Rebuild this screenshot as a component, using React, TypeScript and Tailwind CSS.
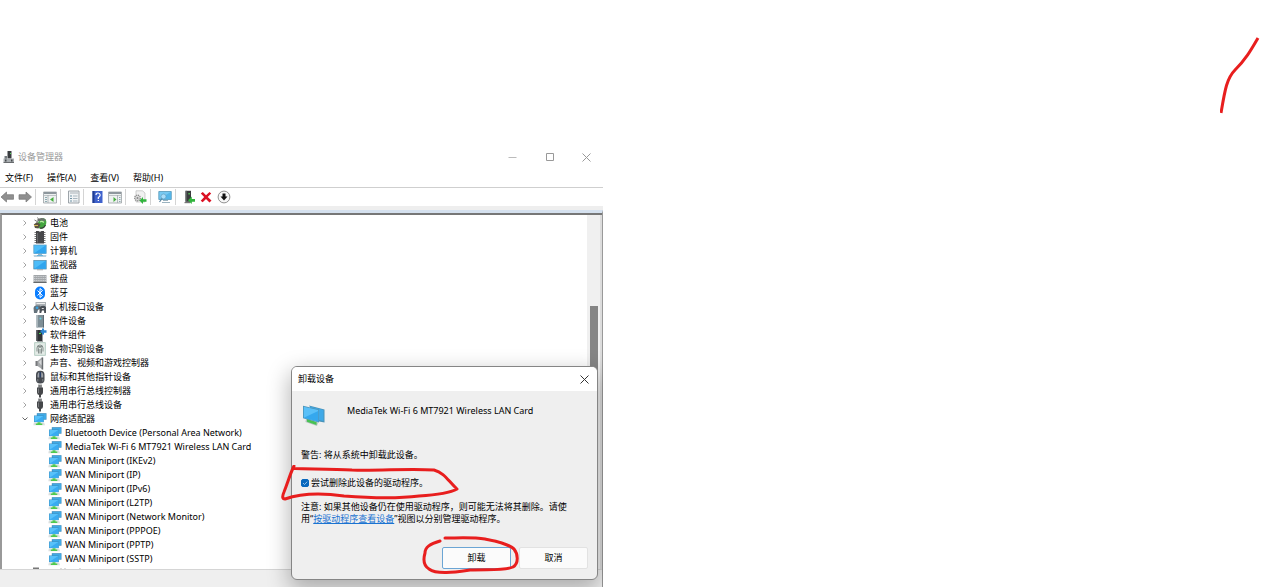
import React, { useState } from "react";

type IconName =
  | "battery"
  | "firmware"
  | "computer"
  | "monitor"
  | "keyboard"
  | "bluetooth"
  | "hid"
  | "software"
  | "component"
  | "biometric"
  | "sound"
  | "mouse"
  | "usb"
  | "network";

const drawings: Record<IconName, React.ReactNode> = {
  battery: (
    <>
      <ellipse cx="9" cy="7.5" rx="4" ry="5.6" fill="#43a540" transform="rotate(25 9 7.5)" />
      <path d="M4 3.800Q8 .5 12.800 3.500L11.500 5.500Q8 3.500 5 5.500z" fill="#6b746d" />
      <path d="M7 6Q9 4.500 10.800 6.500" stroke="#b9eda2" strokeWidth="1.400" fill="none" />
      <path d="M4.500 1.500l2 3M1.500 4l3.500 2" stroke="#666" strokeWidth=".9" />
      <path d="M.8 8.500L4 6l3.500 2.500-2 4-3.500-.5z" fill="#5a5340" />
      <path d="M1 9.500h4" stroke="#d1b759" />
      <path d="M7 12Q10.500 13 12.500 9" stroke="#373f38" strokeWidth="1.200" fill="none" />
    </>
  ),
  firmware: (
    <>
      <path d="M1.500 2.500h2M1.500 4.500h2M1.500 6.500h2M1.500 8.500h2M1.500 10.500h2M1.500 12.500h2M10.500 2.500h2M10.500 4.500h2M10.500 6.500h2M10.500 8.500h2M10.500 10.500h2M10.500 12.500h2" stroke="#777" />
      <path d="M3 1h2.500q1.500 1.500 3 0H11v12.500H3z" fill="#47474a" />
      <path d="M4.500 3v9.500" stroke="#66686a" />
    </>
  ),
  computer: (
    <>
      <rect x=".8" y="1" width="12.400" height="8.500" fill="#4dbcf8" stroke="#5a9dc2" strokeWidth=".7" />
      <path d="M1.200 9.200L12.800 1.300v7.900z" fill="#31a5ee" />
      <path d="M5 10h4v1H5z" fill="#9db8c8" />
      <path d="M.5 11h13l-.5 2H1z" fill="#bdd3df" />
      <path d="M4 11.500h6" stroke="#68b4dd" />
    </>
  ),
  monitor: (
    <>
      <rect x=".8" y="2.500" width="12.400" height="8.500" fill="#4dbcf8" stroke="#4d87a5" strokeWidth=".7" />
      <path d="M1.200 10.700L12.800 2.800v7.900z" fill="#31a5ee" />
      <path d="M4 11.800h6" stroke="#999" strokeWidth=".8" />
    </>
  ),
  keyboard: (
    <>
      <rect x=".5" y="3" width="13" height="8" fill="#a2a6a9" />
      <path d="M1 4.500h12M1 6.500h12M1 8.500h12" stroke="#c9cccf" strokeDasharray="1.300 .5" />
      <path d="M.5 10.500h13" stroke="#64686b" />
    </>
  ),
  bluetooth: (
    <>
      <rect x="2" y=".5" width="10" height="13" rx="5" fill="#0a7eff" />
      <path d="M4.500 4.500l5 5L7 11.500v-9l2.500 2-5 5" stroke="#fff" fill="none" strokeWidth="1" />
    </>
  ),
  hid: (
    <>
      <path d="M2.500 2h10.500v5H2.500z" fill="#aab0b4" />
      <path d="M3.500 3.500h8.500" stroke="#eee" />
      <path d="M.5 8Q.8 5 4 5.500h3V9l-2 1-1 3H1z" fill="#65737c" />
      <path d="M6.500 7q4-2.500 6.500 0v6h-1.800L11 10.500H9L8.200 13H6.500z" fill="#4a5057" />
      <circle cx="4" cy="7.800" r="1.300" fill="#39a2df" />
      <path d="M8.800 8.500h2" stroke="#ddd" />
    </>
  ),
  software: (
    <>
      <path d="M3.500 1h7.500v12.500H3.500z" fill="#7e8e96" />
      <path d="M3.500 1h1.500v12.500H3.500z" fill="#a8b4b9" />
      <path d="M10 1h1v12.500h-1z" fill="#5d6b74" />
      <circle cx="7.500" cy="4.500" r="1" fill="#66d4e6" />
    </>
  ),
  component: (
    <>
      <path d="M3 2h6.500v11H3z" fill="#303336" />
      <path d="M3 2h1.500v11H3z" fill="#65696d" />
      <path d="M6 5h2v1H6z" fill="#45e34d" />
      <path d="M9 .5h2v1.700h2.500v2.600H11v1.700H9V4.800H7.500V2.200H9z" fill="#2e86d1" />
      <path d="M4 13.500h6" stroke="#a3a6a8" />
    </>
  ),
  biometric: (
    <>
      <rect x="1.700" y=".7" width="10.600" height="12.600" fill="#e3ebe7" stroke="#a9c5b9" strokeWidth=".8" />
      <path d="M4 9.500V6Q4 3 7 3t3 3v3.500M5.500 11.500v-5Q5.500 5 7 5t1.500 1.500v5M7 7v4.500M4.500 4.500h5" stroke="#7d8783" fill="none" strokeWidth=".9" />
    </>
  ),
  sound: (
    <>
      <path d="M2.500 5H5v5H2.500z" fill="#77797c" />
      <path d="M4.500 5l5-4v12.500l-5-3.500z" fill="#a7aaac" />
      <path d="M8.700 1.500h1.500v12H8.700z" fill="#696d70" />
      <path d="M5.500 6L8.500 3.500v6z" fill="#d4d6d7" />
    </>
  ),
  mouse: (
    <>
      <rect x="3" y=".8" width="8.500" height="12.700" rx="4" fill="#474b51" />
      <path d="M4.500 5Q4.800 2.500 6.300 2v5.500H4.500zM8.200 2q1.800.5 2 3v2.500h-2z" fill="#9da2a9" />
      <path d="M7.200 2v5.500" stroke="#203c70" />
      <path d="M4.800 9v2.500M9.800 9v2.500" stroke="#80858b" />
    </>
  ),
  usb: (
    <>
      <path d="M5 .5h4V4H5z" fill="#96999b" />
      <path d="M4 3.500h6V8.500q0 2-2 2.500v2.500H6V11Q4 10.500 4 8.500z" fill="#45474a" />
      <path d="M5.500 4.500v4.500" stroke="#77797c" />
      <path d="M6 2h.8M7.500 2h.8" stroke="#444" />
    </>
  ),
  network: (
    <>
      <path d="M3.800 1.200h9.700v6.500H3.800z" fill="#3c8dbf" />
      <path d="M4.500 1.900H13V7H4.500z" fill="#3faae6" />
      <path d="M1 3.500h9.800v6.700H1z" fill="#3c8dbf" />
      <path d="M1.500 4h8.800v5.700H1.500z" fill="#57c1fa" />
      <path d="M1.500 9.700L10.300 4v5.700z" fill="#39abf1" />
      <path d="M.8 10.800h10.400l.8 2.500H.3z" fill="#dbe0df" />
      <path d="M4.500 10.200h3v1.300h1.800V13H2.800v-1.500h1.700z" fill="#4fc94f" />
    </>
  ),
};

function DeviceIcon({ name }: { name: IconName }) {
  return (
    <svg viewBox="0 0 14 14" className="size-3.5 shrink-0" aria-hidden="true">
      {drawings[name]}
    </svg>
  );
}

const categories: { icon: IconName; label: string }[] = [
  { icon: "battery", label: "电池" },
  { icon: "firmware", label: "固件" },
  { icon: "computer", label: "计算机" },
  { icon: "monitor", label: "监视器" },
  { icon: "keyboard", label: "键盘" },
  { icon: "bluetooth", label: "蓝牙" },
  { icon: "hid", label: "人机接口设备" },
  { icon: "software", label: "软件设备" },
  { icon: "component", label: "软件组件" },
  { icon: "biometric", label: "生物识别设备" },
  { icon: "sound", label: "声音、视频和游戏控制器" },
  { icon: "mouse", label: "鼠标和其他指针设备" },
  { icon: "usb", label: "通用串行总线控制器" },
  { icon: "usb", label: "通用串行总线设备" },
  { icon: "network", label: "网络适配器" },
];

const adapters = [
  "Bluetooth Device (Personal Area Network)",
  "MediaTek Wi-Fi 6 MT7921 Wireless LAN Card",
  "WAN Miniport (IKEv2)",
  "WAN Miniport (IP)",
  "WAN Miniport (IPv6)",
  "WAN Miniport (L2TP)",
  "WAN Miniport (Network Monitor)",
  "WAN Miniport (PPPOE)",
  "WAN Miniport (PPTP)",
  "WAN Miniport (SSTP)",
];

function TitleBar() {
  return (
    <header className="flex h-5 items-center pr-3 pl-[3px] text-[#999]">
      <svg viewBox="0 0 12 12" className="size-3 shrink-0" aria-hidden="true">
        <path d="M4.500 0h4v7.500h-4z" fill="#3a3d40" />
        <path d="M7 2h1v1H7z" fill="#55dd55" />
        <path d="M1.500 5h2.500v3H1.500z" fill="#747a7e" />
        <path d="M.5 7.500h10.500v4H.5z" fill="#a8adb0" />
        <path d="M2 8.500h1.500v2H2zM8 8.500h1.500v2H8zM.5 11h10.500v.7H.5z" fill="#44484b" />
      </svg>
      <h1 className="ml-[3px] flex-1">设备管理器</h1>
      <div className="flex gap-7">
        <button type="button" aria-label="最小化">
          <svg viewBox="0 0 9 9" className="size-[9px]" fill="none" stroke="#bbb">
            <path d="M.5 4.500h8" />
          </svg>
        </button>
        <button type="button" aria-label="最大化">
          <svg viewBox="0 0 9 9" className="size-[9px]" fill="none" stroke="#999">
            <path d="M1.500.5h7v7h-7z" />
          </svg>
        </button>
        <button type="button" aria-label="关闭窗口">
          <svg viewBox="0 0 9 9" className="size-[9px]" fill="none" stroke="#999">
            <path d="M.5.5l8 8M8.500.5l-8 8" />
          </svg>
        </button>
      </div>
    </header>
  );
}

function Tool({ label, narrow, children }: { label: string; narrow?: boolean; children: React.ReactNode }) {
  return (
    <button type="button" aria-label={label} className={narrow ? "w-3 shrink-0" : "w-3.5 shrink-0"}>
      <svg viewBox={narrow ? "1 0 12 14" : "0 0 14 14"} className="h-3.5 w-full">
        {children}
      </svg>
    </button>
  );
}

function Separator() {
  return <span className="mr-1 h-4 w-px shrink-0 bg-[#d4d4d4]" />;
}

function PanelDrawing({ mirrored }: { mirrored?: boolean }) {
  return (
    <>
      <path d="M.5 2h13v11H.5z" fill="#eef1f1" stroke="#9ba1a5" strokeWidth=".8" />
      <path d="M1 2h12v2H1z" fill="#8e979d" />
      <path d="M1 5.500h12" stroke="#c0c5c8" />
      <path d={mirrored ? "M9.500 5v8" : "M5 5v8"} stroke="#a2abaf" strokeWidth=".8" />
      <path d={mirrored ? "M11 7.500h1.500M11 9.500h1.500M11 11.500h1.500" : "M2 7.500h2M2 9.500h2M2 11.500h2"} stroke="#8eabb2" />
      <path d={mirrored ? "M5.500 7l3 2.500-3 2.500z" : "M10.500 7l-3.500 2.500 3.500 2.500z"} fill="#45ae3d" />
    </>
  );
}

function Toolbar() {
  return (
    <div className="flex h-[18px] items-center gap-[3px] pl-px">
      <Tool label="后退">
        <path d="M0 7l5.500-5v2.700h7v4.600h-7V12z" fill="#8f8f8f" stroke="#777" strokeWidth=".7" />
      </Tool>
      <Tool label="前进">
        <path d="M13.500 7L8 2v2.700H1v4.600h7V12z" fill="#8f8f8f" stroke="#777" strokeWidth=".7" />
      </Tool>
      <Separator />
      <Tool label="显示控制台树">
        <PanelDrawing />
      </Tool>
      <Separator />
      <Tool label="属性" narrow>
        <path d="M1.500 1h10.500v12H1.500z" fill="#f0f3f5" stroke="#929a9f" strokeWidth=".9" />
        <path d="M3 3h8" stroke="#aab2b8" />
        <path d="M3 6h2M3 8.500h2M3 11h2" stroke="#7093a6" strokeWidth="1.200" />
        <path d="M6 6h4.500M6 8.500h4.500M6 11h4.500" stroke="#a9b6bf" />
      </Tool>
      <Separator />
      <Tool label="帮助">
        <path d="M1.500 1h10v12h-10z" fill="#3f62cc" />
        <path d="M1.500 1h2v12h-2z" fill="#203c90" />
        <path d="M5 5Q5 3 7 3t2.200 2Q9.200 6.300 7.300 7.500V9M6.700 10.500h1.300" fill="none" stroke="#fff" strokeWidth="1.200" />
      </Tool>
      <Tool label="显示操作窗格">
        <PanelDrawing mirrored />
      </Tool>
      <Separator />
      <Tool label="更新驱动程序">
        <path d="M3 .8h6.500L12 3v9H3z" fill="#f1f1f1" stroke="#bbb" strokeWidth=".7" />
        <circle cx="4.500" cy="8" r="2.800" fill="#ddd" stroke="#8b8b8b" strokeDasharray="1.200 .7" strokeWidth="1.300" />
        <circle cx="4.500" cy="8" r="1" fill="#888" />
        <path d="M6.500 10.500l3.500-3.500v2.200h3.500v2.600H10V14z" fill="#30b43c" />
      </Tool>
      <Separator />
      <Tool label="扫描检测硬件改动">
        <path d="M.8 1.500h12.500v8H.8z" fill="#77c9f2" stroke="#5395b8" strokeWidth=".8" />
        <path d="M1.200 9.200L13 1.800v7.400z" fill="#55b5e8" />
        <path d="M5 10.500h5M4 12.500h8" stroke="#9bb3c0" />
        <circle cx="5.500" cy="6.500" r="2.500" fill="#a9ddfa" stroke="#5d98b9" strokeWidth=".6" />
        <path d="M4 8.500L1.500 12" stroke="#5e87a0" strokeWidth="1.200" />
      </Tool>
      <Separator />
      <Tool label="启用设备">
        <path d="M2.500 .8h5.500v11H2.500z" fill="#393c3d" />
        <path d="M2.500 .8h1.200v11H2.500z" fill="#666b6d" />
        <path d="M5.500 3h1.200v1.500H5.500z" fill="#5be05a" />
        <path d="M1.500 12h6v1.200h-6z" fill="#777" />
        <path d="M5 10.300L8.800 6.500v2.400H12v2.800H8.800V14z" fill="#30b43c" />
      </Tool>
      <Tool label="卸载设备">
        <path d="M.8 3.500L2.800 2l3.200 3.200L9.500 2l1.700 1.500-3.500 3.400 3.800 3.500-2 2L6 8.900l-3.300 3.300-2-1.500L4.200 7z" fill="#db1123" />
      </Tool>
      <Tool label="禁用设备">
        <circle cx="7" cy="7" r="5.900" fill="#f8f8f8" stroke="#777" strokeWidth=".8" />
        <path d="M5.500 3.500h3v3h2L7 10.500 3.500 6.500h2z" fill="#111" />
      </Tool>
    </div>
  );
}

function DeviceTree() {
  return (
    <div className="flex min-h-0 flex-1 border-t-2 border-l-2 border-t-[#777] border-l-[#999] bg-white">
      <ul className="min-w-0 flex-1 overflow-hidden pt-px">
        {categories.map(({ icon, label }) => {
          const open = icon === "network";
          return (
            <li key={label}>
              <div className="flex h-3.5 items-center pl-5">
                <button type="button" aria-label={label} aria-expanded={open} className="mr-[5px] shrink-0">
                  <svg viewBox="0 0 6 6" className="size-1.5" fill="none" stroke={open ? "#555" : "#999"} strokeWidth=".9">
                    <path d={open ? "M.5 1.500L3 4l2.500-2.500" : "M1.500.5L4 3 1.500 5.500"} />
                  </svg>
                </button>
                <DeviceIcon name={icon} />
                <span className="ml-[3px] whitespace-nowrap">{label}</span>
              </div>
              {open && (
                <ul>
                  {adapters.map((name) => (
                    <li key={name} className="flex h-3.5 items-center gap-[3px] pl-[46px] whitespace-nowrap">
                      <DeviceIcon name="network" />
                      {name}
                    </li>
                  ))}
                </ul>
              )}
            </li>
          );
        })}
        <li className="flex h-3.5 items-start pl-[31px]">
          <svg viewBox="0 0 60 4" className="mt-px h-1 w-[60px]" aria-hidden="true">
            <path d="M0 .5h6v2H0z" fill="#777" />
            <path d="M28 1.500v1M32 1.500v1M47 1.500v1" stroke="#777" />
          </svg>
        </li>
      </ul>
      <div className="flex w-[15px] flex-col border-r-2 border-r-[#dcdcdc] bg-[#f0f0f0] pt-[91px] pr-0.5 pl-[3px]">
        <div className="h-[120px] w-2 bg-[#858585]" />
      </div>
    </div>
  );
}

function UninstallDialog() {
  const [removeDriver, setRemoveDriver] = useState(true);
  return (
    <section
      role="dialog"
      aria-labelledby="dialog-title"
      className="absolute right-[5px] bottom-[7px] w-[307px] overflow-hidden rounded-md border border-[#858585] bg-[#efefef] shadow-[0_8px_22px_2px_rgba(0,0,0,0.28)]"
    >
      <header className="flex h-6 items-center justify-between bg-white pr-2 pl-1.5">
        <h2 id="dialog-title">卸载设备</h2>
        <button type="button" aria-label="关闭">
          <svg viewBox="0 0 9 9" className="size-[9px]" fill="none" stroke="#333">
            <path d="M.5.5l8 8M8.500.5l-8 8" />
          </svg>
        </button>
      </header>
      <div className="pt-3.5 pr-2 pb-2.5 pl-[9px]">
        <div className="flex h-[22px] pl-px">
          <svg viewBox="0 0 24 22" className="h-[22px] w-6 shrink-0" aria-hidden="true">
            <path d="M7 .5l15.500 4v13l-5.500-1z" fill="#4b93b8" />
            <path d="M8 1.500L21.500 5v11L8 13z" fill="#3fa9e8" />
            <path d="M4 13.500l12 4-1 3.500L3.500 17z" fill="#b3c3bd" />
            <path d="M5 14l9.500 3v3L5 16.800z" fill="#47c252" />
            <path d="M1 .8l16 3.700v13L1 13.300z" fill="#4b93b8" />
            <path d="M1.800 1.800L16.200 5v11.500L1.800 12.800z" fill="#5ac0f8" />
            <path d="M1.800 12.800L16.200 6v10.500z" fill="#35a8ee" />
          </svg>
          <p className="ml-[21px] leading-3">MediaTek Wi-Fi 6 MT7921 Wireless LAN Card</p>
        </div>
        <p className="mt-[22px] leading-3">警告: 将从系统中卸载此设备。</p>
        <div className="mt-4 flex h-3 items-center gap-0.5">
          <span className="relative flex size-2 shrink-0">
            <input
              id="remove-driver"
              type="checkbox"
              checked={removeDriver}
              onChange={(event) => setRemoveDriver(event.target.checked)}
              className="size-2 appearance-none rounded-[2px] border border-[#0867bd] bg-white checked:bg-[#0867bd]"
            />
            <svg viewBox="0 0 8 8" className="pointer-events-none absolute inset-0 size-2" fill="none" stroke="#b9d8f2" strokeWidth=".8">
              <path d="M2 4l1.500 1.500L6.200 2.700" />
            </svg>
          </span>
          <label htmlFor="remove-driver">尝试删除此设备的驱动程序。</label>
        </div>
        <p className="mt-3 leading-3 whitespace-nowrap">
          注意: 如果其他设备仍在使用驱动程序，则可能无法将其删除。请使
          <br />
          用“
          <a href="#drivers" className="text-[#1a73d1] underline">
            按驱动程序查看设备
          </a>
          ”视图以分别管理驱动程序。
        </p>
        <div className="mt-[22px] flex justify-end gap-2 pr-px">
          <button type="button" className="h-[22px] w-[69px] rounded-[2px] border border-[#6ba5d4] bg-[#fbfbfb]">
            卸载
          </button>
          <button type="button" className="h-[22px] w-[69px] rounded-[2px] border border-[#e2e2e2] bg-[#fbfbfb]">
            取消
          </button>
        </div>
      </div>
    </section>
  );
}

export default function App() {
  return (
    <main className="relative flex h-screen flex-col overflow-hidden bg-white pt-[147px] font-['Noto_Sans','Noto_Sans_CJK_SC',sans-serif] text-[9px] leading-3 text-black">
      <div className="relative flex min-h-0 w-[603px] max-w-full flex-1 flex-col overflow-hidden">
        <TitleBar />
        <nav className="flex h-[21px] items-end gap-3.5 border-b border-[#cfcfcf] pb-[3px] pl-[5px]">
          {["文件(F)", "操作(A)", "查看(V)", "帮助(H)"].map((item) => (
            <button key={item} type="button">
              {item}
            </button>
          ))}
        </nav>
        <Toolbar />
        <div className="h-1 bg-[#eee]" />
        <div className="flex min-h-0 flex-1 flex-col overflow-hidden border-t-[3px] border-r border-t-[#d5e1ef] border-r-[#999]">
          <DeviceTree />
          <footer className="h-[18px] shrink-0 border-t border-[#d5d5d5] bg-[#efefef]" />
        </div>
        <UninstallDialog />
        <svg
          viewBox="0 0 240 112"
          className="pointer-events-none absolute bottom-2.5 left-[280px] h-28 w-60"
          fill="none"
          stroke="#e81e1e"
          strokeWidth="3"
          strokeLinecap="round"
          strokeLinejoin="round"
          aria-hidden="true"
        >
          <path d="M15 3.500C35 4 55 4 72 5C100 6 130 3 154 5C165 8 168 16 177 24C170 28 155 30 139 31C115 34 90 33 64 31C43 28 22 28 5 34Q1 34 4 27C8 17 10 9 14 1" />
          <path d="M160 76C150 79 145 82 145 88C143 95 144 101 149 104C157 110 176 107 190 105C207 104 224 106 233 102C239 98 238 89 234 84C227 78 215 76 205 74C193 72 178 73 165 73" />
        </svg>
      </div>
      <svg
        viewBox="0 0 40 78"
        className="pointer-events-none absolute top-9 right-[9px] h-[78px] w-10"
        fill="none"
        stroke="#e81e1e"
        strokeWidth="3"
        aria-hidden="true"
      >
        <path d="M38 2C31 14 26 23 15 34C7 42 5 53 1 77" />
      </svg>
    </main>
  );
}
